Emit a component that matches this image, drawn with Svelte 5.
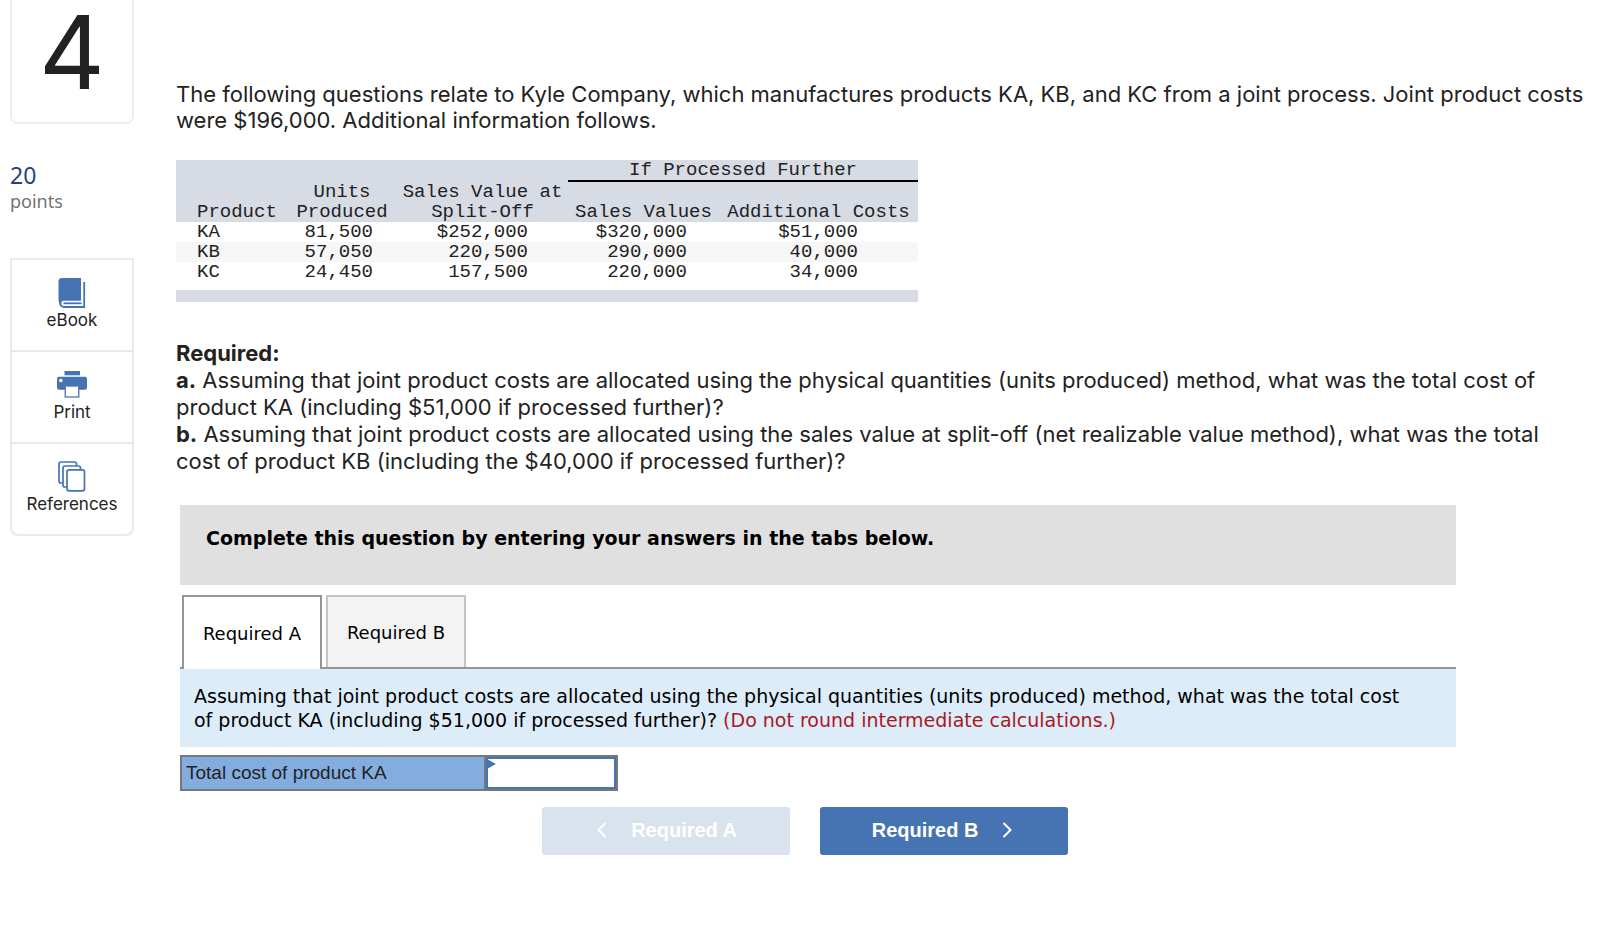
<script lang="ts">
  const rows = [
    { product: 'KA', units: '81,500', split: '$252,000', sales: '$320,000', costs: '$51,000' },
    { product: 'KB', units: '57,050', split: '220,500', sales: '290,000', costs: '40,000' },
    { product: 'KC', units: '24,450', split: '157,500', sales: '220,000', costs: '34,000' },
  ];

  let answer = $state('');
</script>

<div class="page">
  <aside>
    <div class="number">4</div>
    <div class="score">
      <div class="value">20</div>
      <div class="unit">points</div>
    </div>
    <nav>
      <button type="button" class="tool">
        <svg width="30" height="32" viewBox="0 0 30 32">
          <path d="M5 1H24V22.500H6Q4.500 23 4.500 25V27Q1.500 26.500 1.500 23V4.500Q1.500 1 5 1Z" fill="#4674b3" />
          <path d="M24 22.800H7Q3 22.800 3 26T7 30H27.200V5" fill="none" stroke="#4674b3" stroke-width="1.800" />
          <path d="M6.500 26.300H24.500" stroke="#4674b3" stroke-width="1.800" />
        </svg>
        <span>eBook</span>
      </button>
      <button type="button" class="tool">
        <svg width="30" height="32" viewBox="0 0 30 32">
          <rect x="7.500" y="2" width="15.500" height="4.300" fill="#4674b3" />
          <rect x="0" y="7.700" width="30" height="13" rx="2" fill="#4674b3" />
          <circle cx="3.800" cy="11.500" r="1.800" fill="#fff" />
          <rect x="8.200" y="17" width="13.600" height="11" fill="#fff" stroke="#4674b3" stroke-width="1.300" />
        </svg>
        <span>Print</span>
      </button>
      <button type="button" class="tool">
        <svg width="30" height="32" viewBox="0 0 30 32">
          <g fill="#fff" stroke="#4674b3" stroke-width="1.700">
            <rect x="2" y="1" width="17.500" height="21" rx="2" />
            <rect x="6" y="5" width="17.500" height="21" rx="2" />
            <rect x="10" y="8.800" width="17.500" height="21" rx="2" />
          </g>
        </svg>
        <span>References</span>
      </button>
    </nav>
  </aside>

  <main>
    <p class="intro">
      The following questions relate to Kyle Company, which manufactures products KA, KB, and KC from a joint process. Joint product costs
      were $196,000. Additional information follows.
    </p>

    <table class="data">
      <colgroup>
        <col class="c-product" /><col class="c-units" /><col class="c-split" /><col class="c-sales" /><col class="c-costs" />
      </colgroup>
      <thead>
        <tr>
          <th colspan="3"></th>
          <th colspan="2" class="group">If Processed Further</th>
        </tr>
        <tr class="names">
          <th class="left">Product</th>
          <th>Units<br />Produced</th>
          <th>Sales Value at<br />Split-Off</th>
          <th>Sales Values</th>
          <th>Additional Costs</th>
        </tr>
      </thead>
      <tbody>
        {#each rows as row}
          <tr>
            <td class="left">{row.product}</td>
            <td class="units">{row.units}</td>
            <td class="split">{row.split}</td>
            <td class="sales">{row.sales}</td>
            <td class="costs">{row.costs}</td>
          </tr>
        {/each}
      </tbody>
    </table>

    <div class="required">
      <strong>Required:</strong>
      <p>
        <strong>a.</strong> Assuming that joint product costs are allocated using the physical quantities (units produced) method, what was the total cost of
        product KA (including $51,000 if processed further)?
      </p>
      <p>
        <strong>b.</strong> Assuming that joint product costs are allocated using the sales value at split-off (net realizable value method), what was the total
        cost of product KB (including the $40,000 if processed further)?
      </p>
    </div>

    <section class="worksheet">
      <h2>Complete this question by entering your answers in the tabs below.</h2>

      <div class="tabs" role="tablist">
        <button type="button" role="tab" aria-selected="true" class="tab active">Required A</button>
        <button type="button" role="tab" aria-selected="false" class="tab">Required B</button>
      </div>

      <p class="prompt">
        Assuming that joint product costs are allocated using the physical quantities (units produced) method, what was the total cost<br />
        of product KA (including $51,000 if processed further)? <span class="note">(Do not round intermediate calculations.)</span>
      </p>

      <div class="answer">
        <label for="total-cost">Total cost of product KA</label>
        <div class="cell">
          <input id="total-cost" type="text" bind:value={answer} />
        </div>
      </div>

      <div class="pager">
        <button type="button" class="prev" disabled>
          <svg width="10" height="16" viewBox="0 0 10 16"><path d="M8.500 1L1.500 8L8.500 15" /></svg>
          Required A
        </button>
        <button type="button" class="next">
          Required B
          <svg width="10" height="16" viewBox="0 0 10 16"><path d="M1.500 1L8.500 8L1.500 15" /></svg>
        </button>
      </div>
    </section>
  </main>
</div>

<style>
  :global(body) {
    background: #fff;
  }
  .page {
    display: flex;
    align-items: flex-start;
    gap: 42px;
    padding: 0 24px 0 10px;
    color: #222;
    font-family: Inter, 'Liberation Sans', sans-serif;
  }
  button {
    font: inherit;
    color: inherit;
    cursor: pointer;
  }

  aside {
    flex: none;
    width: 124px;
  }
  .number {
    box-sizing: border-box;
    height: 124px;
    border: 2px solid #eee;
    border-top: none;
    border-radius: 0 0 8px 8px;
    text-align: center;
    font: 400 102px/104px Inter, sans-serif;
  }
  .score {
    margin-top: 38px;
    font-family: 'Noto Sans', sans-serif;
  }
  .value {
    color: #1f4480;
    font-size: 23px;
    line-height: 26px;
  }
  .unit {
    color: #737373;
    font-size: 18px;
    line-height: 26px;
  }
  nav {
    margin-top: 44px;
    border: 2px solid #e9e9e9;
    border-radius: 0 0 8px 8px;
  }
  .tool {
    display: flex;
    flex-direction: column;
    align-items: center;
    width: 100%;
    height: 92px;
    padding: 17px 0 0;
    border: none;
    border-bottom: 2px solid #e9e9e9;
    background: none;
    font-size: 17px;
    line-height: 22px;
  }
  .tool:last-child {
    height: 90px;
    border-bottom: none;
  }

  main {
    flex: 1;
    min-width: 0;
  }
  p {
    margin: 0;
  }
  .intro {
    margin-top: 81px;
    font-size: 22px;
    line-height: 26px;
  }

  .data {
    width: 742px;
    margin-top: 27px;
    border-collapse: collapse;
    table-layout: fixed;
    border-bottom: 12px solid #d7dbe4;
    font: 19px/20px 'Liberation Mono', monospace;
  }
  .c-product { width: 111px; }
  .c-units { width: 110px; }
  .c-split { width: 171px; }
  .c-sales { width: 151px; }
  .c-costs { width: 199px; }
  .data th,
  .data td {
    padding: 0;
    font-weight: normal;
    white-space: nowrap;
  }
  .data thead {
    background: #d7dbe4;
  }
  .data th {
    vertical-align: bottom;
  }
  .data .names th {
    padding-top: 1px;
  }
  .data .group {
    border-bottom: 2px solid #000;
  }
  .data td {
    text-align: right;
  }
  .data .left {
    padding-left: 21px;
    text-align: left;
  }
  .data .units { padding-right: 24px; }
  .data .split { padding-right: 40px; }
  .data .sales { padding-right: 32px; }
  .data .costs { padding-right: 60px; }
  .data tbody tr:nth-child(2) {
    background: #f6f6f6;
  }
  .data tbody tr:last-child td {
    padding-bottom: 8px;
  }

  .required {
    margin-top: 38px;
    padding-right: 24px;
    font-size: 22px;
    line-height: 27px;
  }

  .worksheet {
    width: 90%;
    margin: 30px 0 0 4px;
    font-family: 'DejaVu Sans', sans-serif;
    color: #000;
  }
  h2 {
    margin: 0;
    padding: 20px 26px 34px;
    background: #e0e0e0;
    font-size: 19px;
    line-height: 26px;
  }
  .tabs {
    display: flex;
    gap: 4px;
    margin-top: 10px;
    padding-left: 2px;
    border-bottom: 2px solid #959595;
  }
  .tab {
    height: 72px;
    width: 140px;
    padding: 0;
    border: 2px solid #c4c4c4;
    border-bottom: none;
    background: #f3f3f3;
    font-size: 18px;
  }
  .tab.active {
    height: 74px;
    margin-bottom: -2px;
    border-color: #959595;
    background: #fff;
  }
  .prompt {
    padding: 15px 14px;
    background: #ddecf9;
    font-size: 19px;
    line-height: 24px;
  }
  .note {
    color: #a8191f;
  }
  .answer {
    display: flex;
    width: 438px;
    box-sizing: border-box;
    margin-top: 8px;
    border: 2px solid #777;
    font: 19px/32px 'Liberation Sans', sans-serif;
  }
  .answer label {
    flex: 1;
    padding-left: 4px;
    border-right: 2px solid #777;
    background: #84addf;
    color: #222;
  }
  .cell {
    position: relative;
    width: 130px;
  }
  .cell::before {
    content: '';
    position: absolute;
    top: 2px;
    left: 1px;
    border-left: 9px solid #4674b3;
    border-top: 5px solid transparent;
    border-bottom: 5px solid transparent;
  }
  .cell input {
    box-sizing: border-box;
    width: 100%;
    height: 32px;
    padding: 0 12px;
    border: 2px solid #4674b3;
    outline: none;
    font: inherit;
  }
  .pager {
    display: flex;
    justify-content: center;
    gap: 30px;
    margin-top: 16px;
    padding-right: 26px;
  }
  .pager button {
    display: flex;
    align-items: center;
    justify-content: center;
    gap: 24px;
    width: 248px;
    height: 48px;
    padding: 0 4px 2px 0;
    border: none;
    border-radius: 3px;
    background: #4674b3;
    color: #fff;
    font: bold 20px 'Liberation Sans', sans-serif;
  }
  .pager .prev {
    padding: 0 0 2px 2px;
    background: #d9e3ee;
    cursor: default;
  }
  .pager path {
    fill: none;
    stroke: #fff;
    stroke-width: 2;
  }
</style>
